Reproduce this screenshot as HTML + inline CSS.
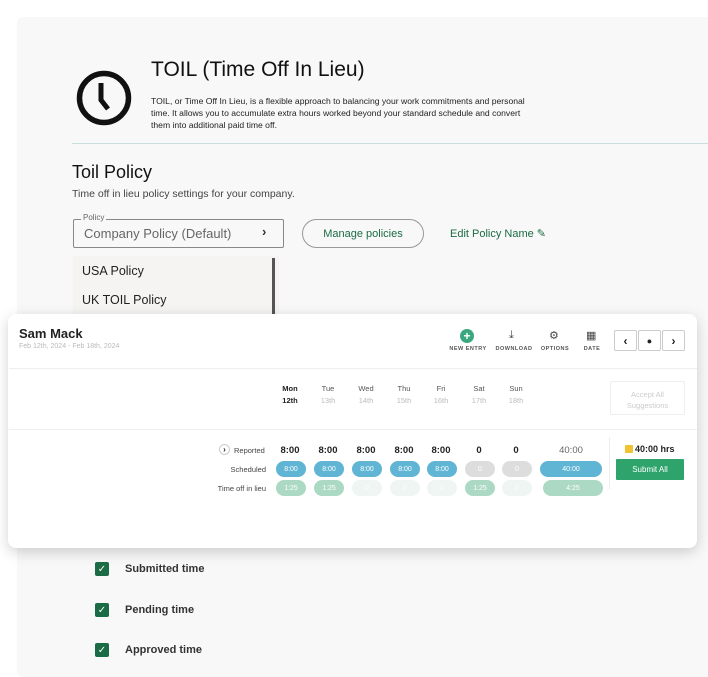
<!DOCTYPE html>
<html><head><style>
*{margin:0;padding:0;box-sizing:border-box}
body{width:708px;height:654px;background:#fff;font-family:"Liberation Sans",sans-serif;position:relative;overflow:hidden;color:#222}
.a{position:absolute}
.panel{left:17px;top:17px;width:700px;height:660px;background:#f8f8f8;border-radius:6px}
.card{left:8px;top:314px;width:689px;height:234px;background:#fff;border-radius:8px;box-shadow:0 4px 14px rgba(0,0,0,.18)}
.pill{position:absolute;height:16px;border-radius:8px;font-size:7px;color:#fff;width:30px;display:flex;align-items:center;justify-content:center}
.b{background:#5fb5d3}.g{background:#ddd}.t{background:#acd9c4}.tl{background:#eef5f2}
.c{position:absolute;text-align:center;width:38px}
.chk{position:absolute;left:95px;width:14px;height:14px;background:#1b6b45;border-radius:2px;color:#fff;font-size:10px;display:flex;align-items:center;justify-content:center}
.lbl{position:absolute;left:125px;font-size:11px;font-weight:bold;color:#333}
.ic{position:absolute;font-size:5.5px;color:#555;letter-spacing:.5px;text-align:center;font-weight:bold}
.nb{position:absolute;top:330px;width:23px;height:21px;border:1px solid #ccc;border-radius:2px;font-size:12px;font-weight:bold;display:flex;align-items:center;justify-content:center}
</style></head><body>
<div class="a panel"></div>
<svg class="a" style="left:76px;top:68px" width="56" height="60" viewBox="0 0 56 60"><circle cx="28" cy="30" r="24.5" fill="none" stroke="#111" stroke-width="5.5"/><path d="M25 15 V32 L32 41" fill="none" stroke="#111" stroke-width="5"/></svg>
<div class="a" style="left:151px;top:58px;font-size:21px;color:#111">TOIL (Time Off In Lieu)</div>
<div class="a" style="left:151px;top:96px;font-size:8.6px;line-height:11.8px;width:390px;color:#222">TOIL, or Time Off In Lieu, is a flexible approach to balancing your work commitments and personal time. It allows you to accumulate extra hours worked beyond your standard schedule and convert them into additional paid time off.</div>
<div class="a" style="left:72px;top:143px;width:640px;height:1px;background:#cdd"></div>
<div class="a" style="left:72px;top:162px;font-size:18px;color:#111">Toil Policy</div>
<div class="a" style="left:72px;top:188px;font-size:10.5px;color:#444">Time off in lieu policy settings for your company.</div>
<div class="a" style="left:73px;top:219px;width:211px;height:29px;border:1px solid #888;border-radius:2px"></div>
<div class="a" style="left:81px;top:213px;font-size:8px;color:#666;background:#f8f8f8;padding:0 2px">Policy</div>
<div class="a" style="left:84px;top:226px;font-size:13px;color:#666">Company Policy (Default)</div>
<div class="a" style="left:262px;top:224px;font-size:13px;font-weight:bold;color:#333">›</div>
<div class="a" style="left:302px;top:219px;width:122px;height:29px;border:1px solid #999;border-radius:15px;font-size:11px;color:#1b6b45;display:flex;align-items:center;justify-content:center">Manage policies</div>
<div class="a" style="left:450px;top:227px;font-size:11px;color:#1b6b45">Edit Policy Name ✎</div>
<div class="a" style="left:73px;top:256px;width:206px;height:60px;background:#f5f4f2"></div>
<div class="a" style="left:272px;top:258px;width:3px;height:58px;background:#555"></div>
<div class="a" style="left:82px;top:264px;font-size:12.5px;color:#222">USA Policy</div>
<div class="a" style="left:82px;top:293px;font-size:12.5px;color:#222">UK TOIL Policy</div>

<div class="a card"></div>
<div class="a" style="left:19px;top:326px;font-size:13px;font-weight:bold;color:#222">Sam Mack</div>
<div class="a" style="left:19px;top:343px;font-size:7px;color:#bbb">Feb 12th, 2024 - Feb 18th, 2024</div>
<div class="a" style="left:460px;top:329px;width:14px;height:14px;border-radius:50%;background:#3aa77f;color:#fff;font-size:12px;font-weight:bold;display:flex;align-items:center;justify-content:center">+</div>
<div class="ic" style="left:446px;top:346px;width:44px">NEW ENTRY</div>
<div class="a" style="left:509px;top:329px;font-size:11px;color:#444">⤓</div>
<div class="ic" style="left:492px;top:346px;width:44px">DOWNLOAD</div>
<div class="a" style="left:549px;top:329px;font-size:11px;color:#444">⚙</div>
<div class="ic" style="left:535px;top:346px;width:40px">OPTIONS</div>
<div class="a" style="left:586px;top:329px;font-size:11px;color:#444">▦</div>
<div class="ic" style="left:578px;top:346px;width:28px">DATE</div>
<div class="nb" style="left:614px">‹</div><div class="nb" style="left:638px;font-size:9px">●</div><div class="nb" style="left:662px">›</div>
<div class="a" style="left:9px;top:368px;width:688px;height:1px;background:#eee"></div>
<div class="a" style="left:9px;top:429px;width:688px;height:1px;background:#eee"></div>
<div class="a" style="left:610px;top:381px;width:75px;height:34px;border:1px solid #eee;border-radius:2px;font-size:7.5px;color:#ccc;text-align:center;padding-top:7px;line-height:11px">Accept All<br>Suggestions</div>

<div class="a" style="left:0;top:383px;font-size:7.5px;line-height:12px">
<div class="c" style="left:271px;font-weight:bold">Mon<br>12th</div>
<div class="c" style="left:309px;color:#555">Tue<br><span style="color:#bbb">13th</span></div>
<div class="c" style="left:347px;color:#555">Wed<br><span style="color:#bbb">14th</span></div>
<div class="c" style="left:385px;color:#555">Thu<br><span style="color:#bbb">15th</span></div>
<div class="c" style="left:422px;color:#555">Fri<br><span style="color:#bbb">16th</span></div>
<div class="c" style="left:460px;color:#555">Sat<br><span style="color:#bbb">17th</span></div>
<div class="c" style="left:497px;color:#555">Sun<br><span style="color:#bbb">18th</span></div>
</div>

<div class="a" style="left:219px;top:444px;width:11px;height:11px;border-radius:50%;border:1px solid #ccc;font-size:8px;font-weight:bold;display:flex;align-items:center;justify-content:center">›</div>
<div class="a" style="left:234px;top:446px;font-size:7.5px;color:#444">Reported</div>
<div class="a" style="left:200px;top:465px;width:66px;text-align:right;font-size:7.5px;color:#444">Scheduled</div>
<div class="a" style="left:190px;top:484px;width:76px;text-align:right;font-size:7.5px;color:#444">Time off in lieu</div>

<div class="a" style="left:0;top:445px;font-size:9.5px;font-weight:bold">
<div class="c" style="left:271px">8:00</div><div class="c" style="left:309px">8:00</div><div class="c" style="left:347px">8:00</div><div class="c" style="left:385px">8:00</div><div class="c" style="left:422px">8:00</div><div class="c" style="left:460px">0</div><div class="c" style="left:497px">0</div>
<div class="c" style="left:540px;width:62px;font-weight:normal;color:#666">40:00</div>
</div>
<div class="a" style="left:0;top:461px">
<div class="pill b" style="left:276px">8:00</div><div class="pill b" style="left:314px">8:00</div><div class="pill b" style="left:352px">8:00</div><div class="pill b" style="left:390px">8:00</div><div class="pill b" style="left:427px">8:00</div><div class="pill g" style="left:465px">0</div><div class="pill g" style="left:502px">0</div><div class="pill b" style="left:540px;width:62px">40:00</div>
</div>
<div class="a" style="left:0;top:480px">
<div class="pill t" style="left:276px">1:25</div><div class="pill t" style="left:314px">1:25</div><div class="pill tl" style="left:352px">0</div><div class="pill tl" style="left:390px">0</div><div class="pill tl" style="left:427px">0</div><div class="pill t" style="left:465px">1:25</div><div class="pill tl" style="left:502px">0</div><div class="pill t" style="left:543px;width:60px">4:25</div>
</div>
<div class="a" style="left:609px;top:437px;width:1px;height:52px;background:#eee"></div>
<div class="a" style="left:625px;top:445px;width:8px;height:8px;background:#f1c232;border-radius:1px"></div>
<div class="a" style="left:635px;top:444px;font-size:9px;font-weight:bold">40:00 hrs</div>
<div class="a" style="left:616px;top:459px;width:68px;height:21px;background:#2ea46c;color:#fff;font-size:8px;border-radius:1px;display:flex;align-items:center;justify-content:center">Submit All</div>

<div class="chk" style="top:562px">✓</div><div class="lbl" style="top:563px">Submitted time</div>
<div class="chk" style="top:603px">✓</div><div class="lbl" style="top:604px">Pending time</div>
<div class="chk" style="top:643px">✓</div><div class="lbl" style="top:644px">Approved time</div>
</body></html>
